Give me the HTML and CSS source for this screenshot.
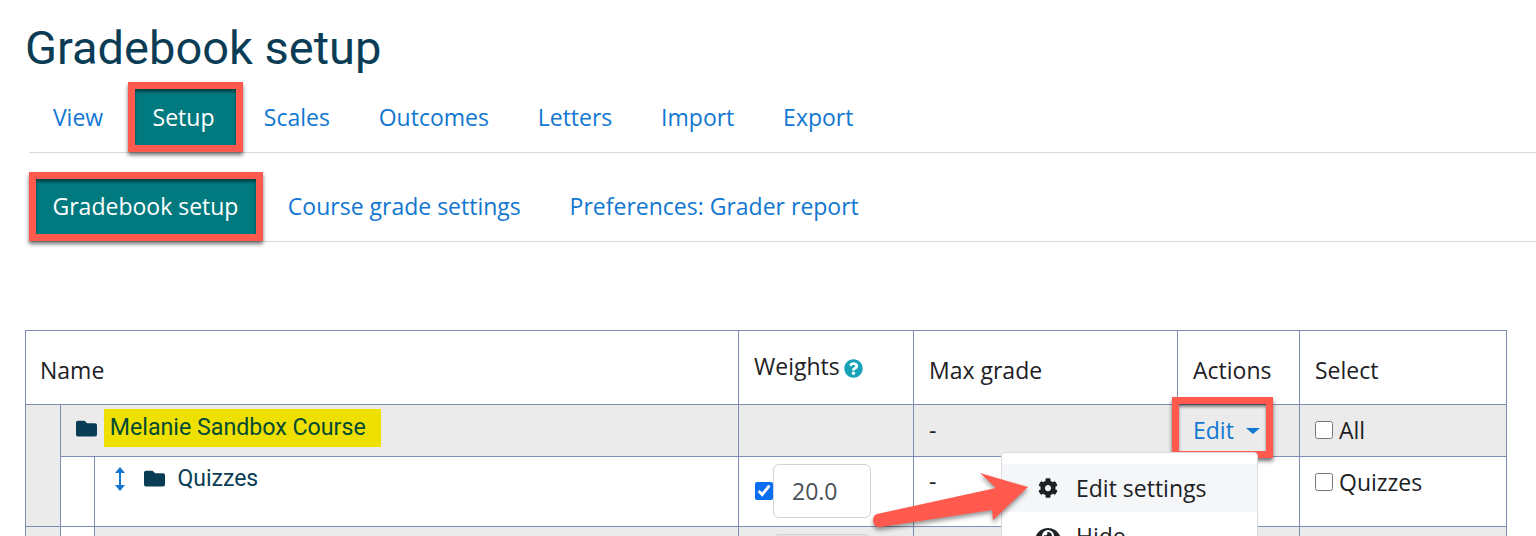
FILE: index.html
```html
<!DOCTYPE html>
<html>
  <head>
    <meta charset="utf-8">
    <title>Gradebook setup</title>
    <link rel="stylesheet" href="styles.css">
  </head>
  <body>
    <div class="page">
      <h1>Gradebook setup</h1>
      <nav class="tabs">
        <a href="#">View</a>
        <a href="#" class="active setup">Setup</a>
        <a href="#">Scales</a>
        <a href="#">Outcomes</a>
        <a href="#">Letters</a>
        <a href="#">Import</a>
        <a href="#">Export</a>
      </nav>
      <nav class="tabs sub">
        <a href="#" class="active book">Gradebook setup</a>
        <a href="#">Course grade settings</a>
        <a href="#">Preferences: Grader report</a>
      </nav>
      <table class="grades">
        <colgroup>
          <col class="c-indent1">
          <col class="c-indent2">
          <col class="c-name">
          <col class="c-weights">
          <col class="c-max">
          <col class="c-actions">
          <col class="c-select">
        </colgroup>
        <tr class="head">
          <th colspan="3" class="name">Name</th>
          <th class="weights">Weights<svg class="help" viewBox="0 0 512 512"><path d="M504 256c0 136.997-111.043 248-248 248S8 392.997 8 256C8 119.083 119.043 8 256 8s248 111.083 248 248zM262.655 90c-54.497 0-89.255 22.957-116.549 63.758-3.536 5.286-2.353 12.415 2.715 16.258l34.699 26.31c5.205 3.947 12.621 3.008 16.665-2.122 17.864-22.658 30.113-35.797 57.303-35.797 20.429 0 45.698 13.148 45.698 32.958 0 14.976-12.363 22.667-32.534 33.976C247.128 238.528 216 254.941 216 296v4c0 6.627 5.373 12 12 12h56c6.627 0 12-5.373 12-12v-1.333c0-28.462 83.186-29.647 83.186-106.667 0-58.002-60.165-102-116.531-102zM256 338c-25.365 0-46 20.635-46 46 0 25.364 20.635 46 46 46s46-20.636 46-46c0-25.365-20.635-46-46-46z"/></svg></th>
          <th>Max grade</th>
          <th>Actions</th>
          <th>Select</th>
        </tr>
        <tr class="course grey">
          <td rowspan="2"></td>
          <td colspan="2" class="title-cell">
            <svg class="folder first" viewBox="0 0 512 512"><path d="M464 128H272l-64-64H48C21.49 64 0 85.49 0 112v288c0 26.51 21.49 48 48 48h416c26.51 0 48-21.49 48-48V176c0-26.51-21.49-48-48-48z"/></svg>
            <span class="hl">Melanie Sandbox Course</span>
          </td>
          <td></td>
          <td class="dash">-</td>
          <td><a href="#" class="edit">Edit<i class="caret"></i></a></td>
          <td><label class="pick"><input type="checkbox">All</label></td>
        </tr>
        <tr class="cat">
          <td></td>
          <td class="title-cell">
            <svg class="move" viewBox="0 0 12 24"><path d="M6 0l5 6H7v12h4l-5 6-5-6h4V6H1z"/></svg>
            <svg class="folder" viewBox="0 0 512 512"><path d="M464 128H272l-64-64H48C21.49 64 0 85.49 0 112v288c0 26.51 21.49 48 48 48h416c26.51 0 48-21.49 48-48V176c0-26.51-21.49-48-48-48z"/></svg>
            <span class="cat-name">Quizzes</span>
          </td>
          <td><div class="weight"><input type="checkbox" checked><input type="text" value="20.0"></div></td>
          <td class="dash top">-</td>
          <td></td>
          <td><label class="pick top"><input type="checkbox">Quizzes</label></td>
        </tr>
        <tr class="next">
          <td class="grey"></td>
          <td></td>
          <td class="grey"></td>
          <td class="grey"><div class="weight"><span class="spacer"></span><input type="text" class="dim"></div></td>
          <td class="grey"></td>
          <td class="grey"></td>
          <td class="grey"></td>
        </tr>
      </table>

      <div class="frame"></div>

      <div class="menu">
        <a href="#" class="item on">
          <svg class="gear" viewBox="0 0 512 512"><path d="M487.4 315.7l-42.6-24.6c4.3-23.2 4.3-47 0-70.2l42.6-24.6c4.9-2.8 7.1-8.6 5.5-14-11.1-35.6-30-67.8-54.7-94.6-3.8-4.1-10-5.1-14.8-2.3L380.8 110c-17.9-15.4-38.5-27.3-60.8-35.1V25.8c0-5.6-3.9-10.5-9.4-11.7-36.7-8.2-74.3-7.8-109.2 0-5.5 1.2-9.4 6.1-9.4 11.7V75c-22.2 7.9-42.8 19.8-60.8 35.1L88.7 85.5c-4.9-2.8-11-1.9-14.8 2.3-24.7 26.7-43.6 58.9-54.7 94.6-1.7 5.4.6 11.2 5.5 14L67.3 221c-4.3 23.2-4.3 47 0 70.2l-42.6 24.6c-4.9 2.8-7.1 8.6-5.5 14 11.1 35.6 30 67.8 54.7 94.6 3.8 4.1 10 5.1 14.8 2.3l42.6-24.6c17.9 15.4 38.5 27.3 60.8 35.1v49.2c0 5.6 3.9 10.5 9.4 11.7 36.7 8.2 74.3 7.8 109.2 0 5.5-1.2 9.4-6.1 9.4-11.7v-49.2c22.2-7.9 42.8-19.8 60.8-35.1l42.6 24.6c4.9 2.8 11 1.9 14.8-2.3 24.7-26.7 43.6-58.9 54.7-94.6 1.5-5.5-.7-11.3-5.6-14.1zM256 336c-44.1 0-80-35.9-80-80s35.9-80 80-80 80 35.9 80 80-35.9 80-80 80z"/></svg>
          Edit settings
        </a>
        <a href="#" class="item">
          <svg class="eye" viewBox="0 0 576 512"><path d="M572.52 241.4C518.29 135.59 410.93 64 288 64S57.68 135.64 3.48 241.41a32.35 32.35 0 0 0 0 29.19C57.71 376.41 165.07 448 288 448s230.32-71.64 284.52-177.41a32.35 32.35 0 0 0 0-29.19zM288 400a144 144 0 1 1 144-144 143.93 143.93 0 0 1-144 144zm0-240a95.31 95.31 0 0 0-25.31 3.79 47.85 47.85 0 0 1-66.9 66.9A95.78 95.78 0 1 0 288 160z"/></svg>
          Hide
        </a>
      </div>

      <svg class="arrow" viewBox="0 0 170 70" width="170" height="70">
        <path d="M7 46 L126 20 L110 5 L158 19 L123 52 L122 42 L11 59 Q4 60 3 53 Q3 47 7 46 Z"/>
      </svg>
    </div>
  </body>
</html>
```

FILE: styles.css
```css
html, body {
  margin: 0;
  background: #fff;
}
.page {
  position: relative;
  width: 1536px;
  height: 536px;
  overflow: hidden;
  font-family: "Open Sans", sans-serif;
  color: #1d2125;
}
h1 {
  margin: 0;
  height: 82px;
  padding-left: 25px;
  box-sizing: border-box;
  font-family: Roboto, sans-serif;
  font-size: 47px;
  font-weight: 400;
  line-height: 96px;
  color: #0a3d55;
}
.tabs {
  display: flex;
  align-items: center;
  height: 70px;
  margin-left: 28.5px;
  border-bottom: 1px solid #d5d9e2;
  font-size: 23px;
}
.tabs a {
  padding: 0 24.4px;
  color: #1177d1;
  text-decoration: none;
}
.tabs.sub {
  margin-top: 19px;
  height: 69px;
}
.tabs a.active {
  display: flex;
  align-items: center;
  box-sizing: border-box;
  height: 100%;
  padding-bottom: 1px;
  border: 7px solid #ff5a4d;
  background: #017a7f;
  color: #fff;
  box-shadow: 0 3px 4px rgba(0, 0, 0, .55), inset 0 3px 3px rgba(0, 0, 0, .45);
}
.tabs a.setup {
  padding: 0 22px 0 18px;
  margin-right: -4px;
}
.tabs a.book {
  padding: 0 18px 1px 17px;
}
.tabs.sub a:not(.active) {
  padding-bottom: 2px;
}
.grades {
  margin: 88px 0 0 25px;
  width: 1482px;
  table-layout: fixed;
  border-collapse: collapse;
  font-size: 23px;
}
.grades th, .grades td {
  border: 1px solid #7f8db5;
  padding: 0;
  vertical-align: top;
  font-weight: 400;
  text-align: left;
}
.c-indent1 { width: 35px; }
.c-indent2 { width: 34px; }
.c-weights { width: 175px; }
.c-max { width: 264px; }
.c-actions { width: 122px; }
.c-select { width: 207px; }
.head { height: 74px; }
.head th {
  padding: 23px 0 0 15px;
}
.head th.name {
  padding-left: 14px;
}
.head th.weights {
  padding-top: 19px;
}
.help {
  width: 19px;
  height: 19px;
  margin-left: 4px;
  vertical-align: -3px;
  fill: #17a2b8;
}
.grey, .grey td {
  background: #ebebeb;
}
.course { height: 52px; }
.cat { height: 70px; }
.next { height: 60px; }
.title-cell {
  font-family: Roboto, sans-serif;
  color: #0a3d55;
}
.folder {
  width: 21px;
  height: 21px;
  vertical-align: middle;
  fill: #0a3d55;
}
.course .title-cell {
  padding: 4px 0 0 15px;
}
.hl {
  display: inline-block;
  height: 38px;
  line-height: 36px;
  margin-left: 1px;
  padding: 0 15px 0 6px;
  background: #eee000;
  color: #044a35;
  font-size: 23.2px;
}
.cat .title-cell {
  padding: 7px 0 0 19px;
}
.move {
  width: 12px;
  height: 24px;
  margin-right: 12px;
  vertical-align: middle;
  fill: #1177d1;
}
.cat-name {
  margin-left: 7px;
  vertical-align: middle;
}
.dash {
  padding: 9px 0 0 15px !important;
}
.dash.top {
  padding-top: 8px !important;
}
.edit {
  display: block;
  padding: 9px 0 0 15px;
  color: #1177d1;
  text-decoration: none;
}
.caret {
  display: inline-block;
  margin-left: 12px;
  vertical-align: 5px;
  border: 7px solid transparent;
  border-top: 6px solid #1177d1;
  border-bottom: 0;
}
.pick {
  display: flex;
  align-items: center;
  padding: 9px 0 0 15px;
}
.pick input {
  width: 18px;
  height: 18px;
  margin: 0 6px 0 0;
}
.weight {
  display: flex;
  align-items: center;
  padding: 7px 0 0 16px;
}
.weight input[type=checkbox] {
  width: 18px;
  height: 18px;
  margin: 0;
  accent-color: #0a6ef0;
}
.weight input[type=text] {
  box-sizing: border-box;
  width: 98px;
  height: 54px;
  margin: 0;
  padding: 0 18px;
  border: 1px solid #ced4da;
  border-radius: 6px;
  background: #fff;
  font: inherit;
  color: #495057;
}
.weight input.dim {
  background: #e0e0e0;
}
.spacer {
  width: 18px;
}
.frame {
  position: absolute;
  left: 1172px;
  top: 397px;
  width: 87px;
  height: 47px;
  border: 7px solid #ff5a4d;
  box-shadow: 0 3px 4px rgba(0, 0, 0, .55), inset 0 3px 3px rgba(0, 0, 0, .45);
}
.menu {
  position: absolute;
  left: 1001px;
  top: 452px;
  width: 257px;
  height: 120px;
  padding-top: 11px;
  box-sizing: border-box;
  background: #fff;
  border: 1px solid #dadce0;
  border-radius: 4px;
  font-size: 23px;
}
.item {
  display: flex;
  align-items: center;
  height: 48px;
  padding-left: 36px;
  color: #1d2125;
  text-decoration: none;
}
.item.on {
  background: #f5f6f7;
}
.gear {
  width: 20px;
  height: 20px;
  margin-right: 18px;
  fill: #1d2125;
}
.eye {
  width: 24px;
  height: 24px;
  margin: 0 16px 0 -2px;
  fill: #1d2125;
}
.arrow {
  position: absolute;
  left: 870px;
  top: 468px;
  fill: #ff5a4d;
  filter: drop-shadow(0 3px 2px rgba(0, 0, 0, .4));
}
```
